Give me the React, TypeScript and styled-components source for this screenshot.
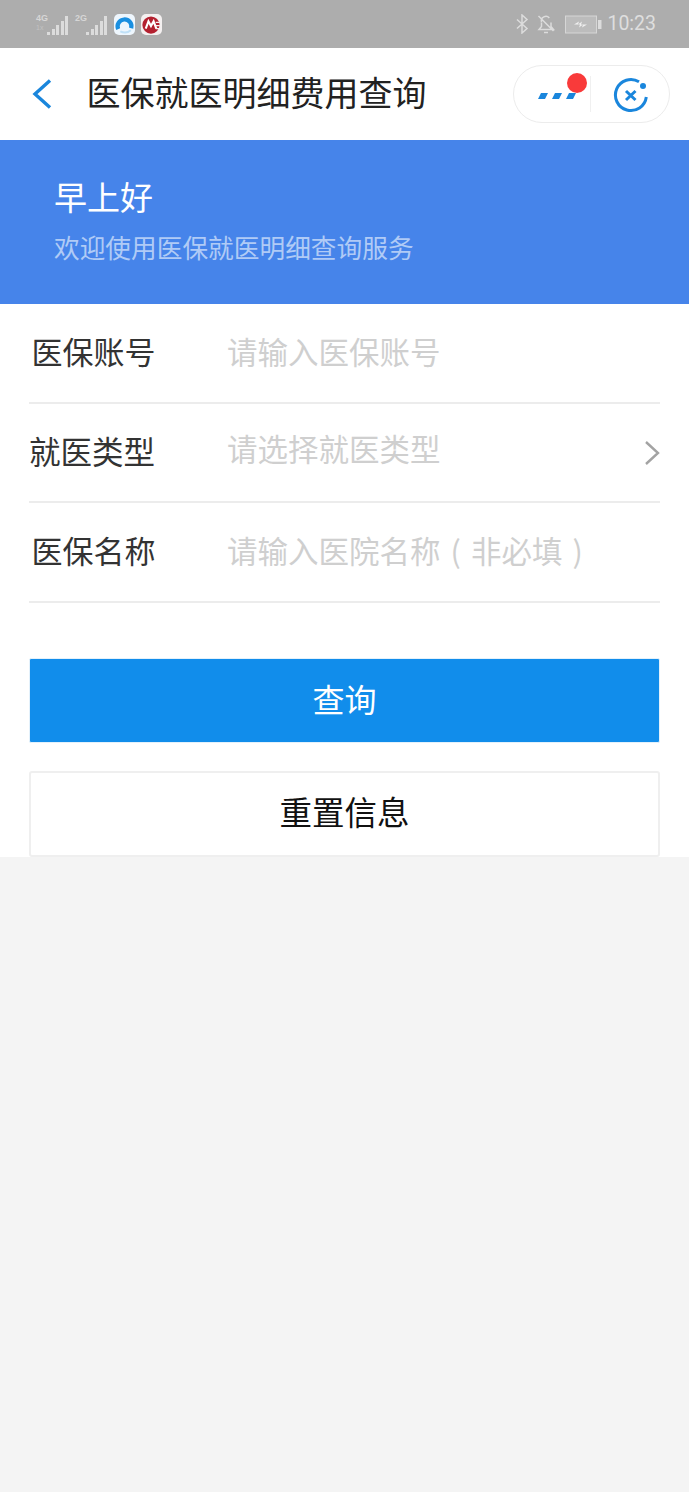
import styled, { createGlobalStyle } from "styled-components";

const CJK = `"Noto Sans CJK SC", "Noto Sans", sans-serif`;

export default function App() {
  return (
    <Page>
      <GlobalStyle />
      <StatusBar>
        <StatusGroup>
          <Signal label="4G" sub="1x" />
          <Signal label="2G" />
          <AppBadge $bg="#eef6fd">
            <svg width="21" height="21" viewBox="0 0 20 20">
              <path d="M4 14.5a6.6 6.6 0 1 1 12.4-1" fill="none" stroke="#1a8fe0" strokeWidth="4" />
              <path d="M6 16.5c3 1.5 7 1.5 10-1" fill="none" stroke="#bfe0f7" strokeWidth="2" />
            </svg>
          </AppBadge>
          <AppBadge $bg="#f4f0f0">
            <svg width="21" height="21" viewBox="0 0 20 20">
              <circle cx="9.5" cy="10.5" r="8.2" fill="#b3202f" />
              <path d="M4.5 14l2.6-7 2.4 4.5L12 7l2.6 7" fill="none" stroke="#fff" strokeWidth="2" />
              <path d="M14 8h4M14 11h4M14 14h4" stroke="#f4f0f0" strokeWidth="1.2" />
            </svg>
          </AppBadge>
        </StatusGroup>
        <StatusGroup>
          <svg width="14" height="20" viewBox="0 0 14 20">
            <path d="M2 5.5l10 9-5 4.5V1l5 4.5-10 9" fill="none" stroke="#dcdcdc" strokeWidth="1.5" />
          </svg>
          <BellSlot>
            <svg width="20" height="20" viewBox="0 0 20 20">
              <path
                d="M5.5 8a4.5 4.5 0 0 1 7.8-4M15 8.5v4l2.5 3H3l2.5-3V8.5M8 18.5h4M2.5 2l15 15"
                fill="none"
                stroke="#dcdcdc"
                strokeWidth="1.5"
              />
            </svg>
          </BellSlot>
          <Battery>
            <svg width="37" height="19" viewBox="0 0 37 19">
              <rect x="0.5" y="1" width="31" height="17" fill="#bcbcbc" stroke="#d6d6d6" />
              <rect x="33" y="5" width="3.5" height="9" fill="#dcdcdc" />
              <path d="M9 9.5l5-3-1 3 4-3-1 3 6 0-5 3 1-3-4 3 1-3z" fill="#efefef" />
            </svg>
          </Battery>
          <Clock>10:23</Clock>
        </StatusGroup>
      </StatusBar>

      <NavBar>
        <BackButton>
          <svg width="24" height="34" viewBox="0 0 24 34">
            <path d="M20 3.5L5 17l15 13.5" fill="none" stroke="#1a86dc" strokeWidth="3.4" />
          </svg>
        </BackButton>
        <NavTitle>医保就医明细费用查询</NavTitle>
        <Capsule>
          <MoreSlot>
            <svg width="38" height="8" viewBox="0 0 38 8">
              <path d="M3 1h7l-3 6H0zM17 1h7l-3 6h-7zM31 1h7l-3 6h-7z" fill="#1a86dc" />
            </svg>
            <RedDot />
          </MoreSlot>
          <CloseSlot>
            <svg width="38" height="38" viewBox="0 0 38 38">
              <path
                d="M27 5.8A15.5 15.5 0 1 0 34.3 21"
                fill="none"
                stroke="#1a86dc"
                strokeWidth="3"
              />
              <circle cx="31" cy="10" r="3" fill="#1a86dc" />
              <path d="M14 15l9.5 9M23.5 15L14 24" stroke="#1a86dc" strokeWidth="3" />
            </svg>
          </CloseSlot>
        </Capsule>
      </NavBar>

      <Banner>
        <Greeting>早上好</Greeting>
        <Welcome>欢迎使用医保就医明细查询服务</Welcome>
      </Banner>

      <Form>
        <FieldRow>
          <FieldLabel>医保账号</FieldLabel>
          <Placeholder>请输入医保账号</Placeholder>
        </FieldRow>
        <FieldRow>
          <FieldLabel $flush>就医类型</FieldLabel>
          <Placeholder $raised>请选择就医类型</Placeholder>
          <Chevron>
            <svg width="18" height="26" viewBox="0 0 18 26">
              <path d="M3 2l12 11L3 24" fill="none" stroke="#a3a3a3" strokeWidth="2.4" />
            </svg>
          </Chevron>
        </FieldRow>
        <FieldRow>
          <FieldLabel>医保名称</FieldLabel>
          <Placeholder>
            请输入医院名称<Paren>(</Paren>非必填<Paren>)</Paren>
          </Placeholder>
        </FieldRow>
      </Form>

      <Actions>
        <PrimaryButton>查询</PrimaryButton>
        <SecondaryButton>重置信息</SecondaryButton>
      </Actions>
    </Page>
  );
}

function Signal({ label, sub }: { label: string; sub?: string }) {
  return (
    <SignalWrap>
      <SignalText>
        <span>{label}</span>
        {sub && <SignalSub>{sub}</SignalSub>}
      </SignalText>
      <Bars>
        {[3, 6, 10, 14, 19].map((h) => (
          <Bar key={h} style={{ height: h }} />
        ))}
      </Bars>
    </SignalWrap>
  );
}

const GlobalStyle = createGlobalStyle`
  html, body {
    margin: 0;
    padding: 0;
    background: #f4f4f4;
  }
`;

const Page = styled.div`
  width: 689px;
  height: 1492px;
  background: #f4f4f4;
  font-family: ${CJK};
  overflow: hidden;
`;

const StatusBar = styled.div`
  height: 48px;
  background: #adadad;
  display: flex;
  justify-content: space-between;
  align-items: center;
  padding: 0 33px 0 36px;
  box-sizing: border-box;
`;

const StatusGroup = styled.div`
  display: flex;
  align-items: center;
`;

const SignalWrap = styled.div`
  display: flex;
  align-items: flex-end;
  width: 39px;
  height: 22px;
`;

const SignalText = styled.div`
  display: flex;
  flex-direction: column;
  width: 11px;
  height: 22px;
  font: bold 9px/10px "Liberation Sans", sans-serif;
  color: #d6d6d6;
`;

const SignalSub = styled.span`
  font-weight: normal;
  font-size: 7px;
  color: #c2c2c2;
`;

const Bars = styled.div`
  display: flex;
  align-items: flex-end;
  gap: 1.5px;
`;

const Bar = styled.div`
  width: 3px;
  background: #dcdcdc;
`;

const AppBadge = styled.div<{ $bg: string }>`
  width: 21px;
  height: 21px;
  margin-right: 6px;
  border-radius: 5px;
  background: ${(p) => p.$bg};
  display: flex;
  align-items: center;
  justify-content: center;
  overflow: hidden;
`;

const BellSlot = styled.div`
  display: flex;
  margin-left: 7px;
`;

const Battery = styled.div`
  display: flex;
  margin-left: 9px;
`;

const Clock = styled.span`
  margin-left: 5px;
  font: 19.5px/24px Roboto, sans-serif;
  color: #dedede;
`;

const NavBar = styled.div`
  height: 92px;
  background: #fff;
  display: flex;
  align-items: center;
  padding: 0 19px 0 30px;
  box-sizing: border-box;
`;

const BackButton = styled.div`
  display: flex;
  width: 56.5px;
`;

const NavTitle = styled.div`
  flex: 1;
  font-size: 34px;
  color: #222;
  line-height: 44px;
  margin-top: -4px;
`;

const Capsule = styled.div`
  width: 157px;
  height: 58px;
  margin-top: -1px;
  border: 1px solid #ececec;
  border-radius: 29px;
  display: flex;
  align-items: center;
  box-sizing: border-box;
`;

const MoreSlot = styled.div`
  position: relative;
  width: 77px;
  height: 36px;
  border-right: 1px solid #f0f0f0;
  display: flex;
  align-items: center;
  justify-content: flex-end;
  padding-right: 14px;
  box-sizing: border-box;
  svg {
    margin-top: 4px;
  }
`;

const RedDot = styled.span`
  position: absolute;
  right: 3px;
  top: -3px;
  width: 20px;
  height: 20px;
  border-radius: 50%;
  background: #f93a3a;
`;

const CloseSlot = styled.div`
  flex: 1;
  display: flex;
  justify-content: center;
  padding-left: 2px;
  margin-top: 2px;
`;

const Banner = styled.div`
  height: 164px;
  background: #4684ea;
  padding: 34px 0 0 54px;
  box-sizing: border-box;
`;

const Greeting = styled.div`
  font-size: 33px;
  line-height: 44px;
  color: #fff;
`;

const Welcome = styled.div`
  margin-top: 11px;
  font-size: 25.7px;
  line-height: 36px;
  color: #b0cbf6;
`;

const Form = styled.div`
  background: #fff;
  padding: 0 29px;
`;

const FieldRow = styled.div`
  height: 99.5px;
  border-bottom: 2px solid #ececec;
  display: flex;
  align-items: center;
  box-sizing: border-box;
  padding-bottom: 4px;
`;

const FieldLabel = styled.div<{ $flush?: boolean }>`
  width: 198px;
  padding-left: ${(p) => (p.$flush ? "0" : "2.5px")};
  box-sizing: border-box;
  font-size: ${(p) => (p.$flush ? "31.5px" : "31px")};
  color: #333;
`;

const Placeholder = styled.div<{ $raised?: boolean }>`
  flex: 1;
  font-size: 30.5px;
  color: #cfcfcf;
  margin-bottom: ${(p) => (p.$raised ? "4px" : "0")};
`;

const Paren = styled.span`
  display: inline-block;
  width: 1em;
  text-align: center;
`;

const Chevron = styled.div`
  display: flex;
  margin: 6px -1px 0 0;
`;

const Actions = styled.div`
  background: #fff;
  padding: 55px 29px 0;
  height: 254px;
  box-sizing: border-box;
`;

const PrimaryButton = styled.div`
  height: 85px;
  background: #118deb;
  border: 1px solid #e3f1fb;
  border-radius: 2px;
  box-sizing: border-box;
  display: flex;
  align-items: center;
  justify-content: center;
  font-size: 32px;
  color: #fff;
  padding-bottom: 5px;
`;

const SecondaryButton = styled.div`
  height: 86px;
  margin-top: 28px;
  background: #fff;
  border: 2px solid #efefef;
  border-radius: 3px;
  box-sizing: border-box;
  display: flex;
  align-items: center;
  justify-content: center;
  font-size: 32.5px;
  color: #111;
  padding-bottom: 6px;
`;
